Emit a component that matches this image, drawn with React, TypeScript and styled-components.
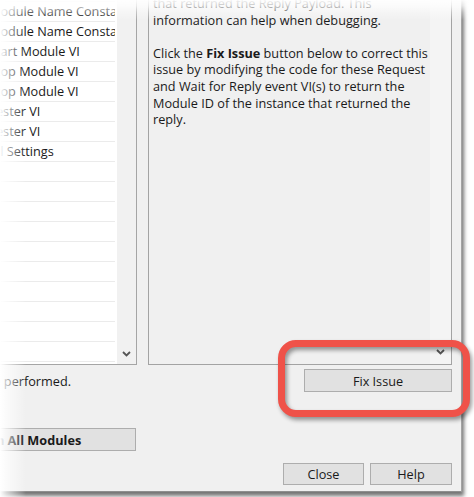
import React from "react";
import styled, { createGlobalStyle } from "styled-components";

const GlobalStyle = createGlobalStyle`
  html, body {
    margin: 0;
    padding: 0;
    background: #fff;
  }
  body {
    overflow: hidden;
    font-family: "Open Sans", "Noto Sans", sans-serif;
  }
`;

const Stage = styled.div`
  position: relative;
  width: 474px;
  height: 497px;
  overflow: hidden;
  background: #fff;
`;

const Dialog = styled.div`
  margin: -19px 0 0 -100px;
  width: 562px;
  box-sizing: border-box;
  background: #f0f0f0;
  border-right: 1px solid #a3a3a3;
  border-bottom: 1px solid #8f8f8f;
  box-shadow: 2px 4px 4px rgba(0, 0, 0, 0.55);
  padding: 0 9px 6px 0;
  display: flex;
  flex-direction: column;
  font-size: 12.7px;
  color: #1a1a1a;
`;

const TopArea = styled.div`
  display: flex;
  gap: 11px;
  height: 384px;
`;

const List = styled.div`
  width: 237px;
  box-sizing: border-box;
  border: 1px solid #a5a5a5;
  background: #fff;
  display: flex;
  overflow: hidden;
`;

const Rows = styled.div`
  flex: 1;
  padding-right: 2px;
  overflow: hidden;
`;

const Row = styled.div`
  height: 20px;
  box-sizing: border-box;
  border-bottom: 1px solid #ebebeb;
  padding-left: 88px;
  line-height: 19px;
  white-space: nowrap;
  overflow: hidden;
`;

const ScrollColumn = styled.div<{ $width: number; $bottom: number; $bg: string }>`
  width: ${(p) => p.$width}px;
  background: ${(p) => p.$bg};
  display: flex;
  align-items: flex-end;
  justify-content: center;
  padding-bottom: ${(p) => p.$bottom}px;
  box-sizing: border-box;
`;

const Panel = styled.div`
  width: 304px;
  box-sizing: border-box;
  border: 1px solid #a3a3a3;
  background: #f0f0f0;
  display: flex;
`;

const PanelText = styled.div`
  flex: 1;
  padding: 13px 0 0 4px;
  line-height: 16.6px;
  white-space: nowrap;
  overflow: hidden;
`;

const ActionRow = styled.div<{ $top: number; $end?: boolean }>`
  display: flex;
  align-items: center;
  gap: 6px;
  margin-top: ${(p) => p.$top}px;
  justify-content: ${(p) => (p.$end ? "flex-end" : "flex-start")};
`;

const Status = styled.div`
  width: 171px;
  display: flex;
  justify-content: flex-end;
  white-space: nowrap;
  overflow: hidden;
  margin-right: auto;
  span {
    flex-shrink: 0;
  }
`;

const Button = styled.button<{ $width: number; $height?: number; $bold?: boolean }>`
  width: ${(p) => p.$width}px;
  height: ${(p) => p.$height ?? 23}px;
  box-sizing: border-box;
  border: 1px solid #adadad;
  background: #e1e1e1;
  font-family: inherit;
  font-size: 12.7px;
  font-weight: ${(p) => (p.$bold ? 700 : 400)};
  color: #1a1a1a;
  padding: 0;
  white-space: nowrap;
`;

const WideButton = styled(Button)`
  margin-left: 20px;
`;

const Highlight = styled.div`
  position: absolute;
  left: 278px;
  top: 340px;
  width: 192px;
  height: 77px;
  box-sizing: border-box;
  border: 7px solid #ef5249;
  border-radius: 18px;
  filter: drop-shadow(2px 3px 2px rgba(0, 0, 0, 0.4));
`;

const LeftFade = styled.div`
  position: absolute;
  left: 0;
  top: 0;
  bottom: 0;
  width: 26px;
  background: linear-gradient(
    to right,
    rgba(255, 255, 255, 1) 0%,
    rgba(255, 255, 255, 0.7) 25%,
    rgba(255, 255, 255, 0) 100%
  );
`;

const TopFade = styled.div`
  position: absolute;
  left: 0;
  top: 0;
  right: 0;
  height: 20px;
  background: linear-gradient(
    to bottom,
    rgba(255, 255, 255, 0.95) 0%,
    rgba(255, 255, 255, 0.75) 30%,
    rgba(255, 255, 255, 0.35) 60%,
    rgba(255, 255, 255, 0) 100%
  );
`;

const Chevron = () => (
  <svg width="9" height="6" viewBox="0 0 9 6">
    <polyline points="1,1 4.5,4.5 8,1" fill="none" stroke="#555" strokeWidth="1.8" />
  </svg>
);

const items = [
  "",
  "Module Name Constant",
  "Module Name Constant",
  "Start Module VI",
  "Stop Module VI",
  "Stop Module VI",
  "Tester VI",
  "Tester VI",
  "All Settings",
];

const App = () => {
  const rows = [...items, ...Array(11).fill("")];
  return (
    <Stage>
      <GlobalStyle />
      <Dialog>
        <TopArea>
          <List>
            <Rows>
              {rows.map((name, i) => (
                <Row key={i}>{name}</Row>
              ))}
            </Rows>
            <ScrollColumn $width={19} $bottom={7} $bg="#f1f1f1">
              <Chevron />
            </ScrollColumn>
          </List>
          <Panel>
            <PanelText>
              that returned the Reply Payload. This
              <br />
              information can help when debugging.
              <br />
              <br />
              Click the <b>Fix Issue</b> button below to correct this
              <br />
              issue by modifying the code for these Request
              <br />
              and Wait for Reply event VI(s) to return the
              <br />
              Module ID of the instance that returned the
              <br />
              reply.
            </PanelText>
            <ScrollColumn $width={21} $bottom={9} $bg="#f4f4f4">
              <Chevron />
            </ScrollColumn>
          </Panel>
        </TopArea>
        <ActionRow $top={4}>
          <Status>
            <span>No changes will be performed.</span>
          </Status>
          <Button $width={148}>Fix Issue</Button>
        </ActionRow>
        <ActionRow $top={36}>
          <WideButton $width={216} $bold>
            Scan All Modules
          </WideButton>
        </ActionRow>
        <ActionRow $top={12} $end>
          <Button $width={81} $height={22}>
            Close
          </Button>
          <Button $width={82} $height={22}>
            Help
          </Button>
        </ActionRow>
      </Dialog>
      <Highlight />
      <LeftFade />
      <TopFade />
    </Stage>
  );
};

export default App;
